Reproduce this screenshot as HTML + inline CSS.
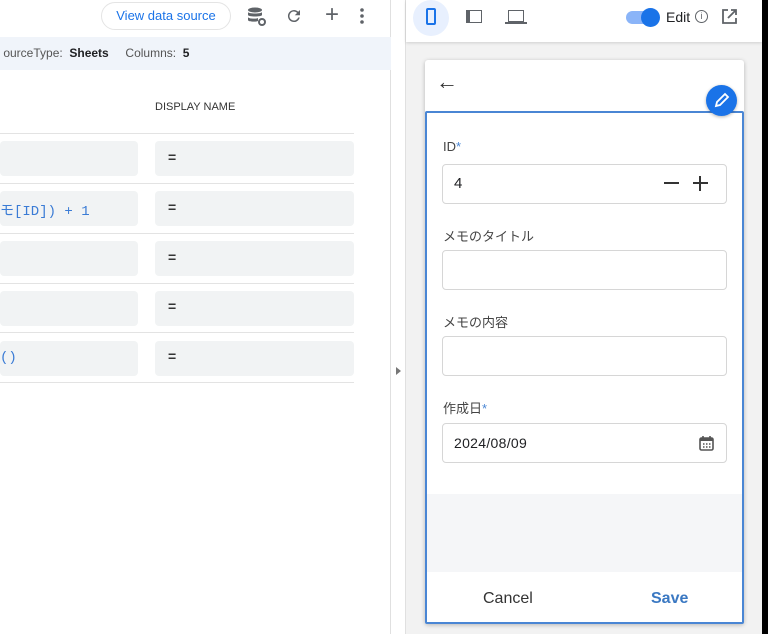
<!DOCTYPE html>
<html><head><meta charset="utf-8"><style>
*{box-sizing:border-box;margin:0;padding:0}
body{width:768px;height:634px;overflow:hidden;position:relative;background:#fff;font-family:"Liberation Sans","Noto Sans CJK JP",sans-serif;color:#202124}
.abs{position:absolute}
.mono{font-family:"Liberation Mono","Noto Sans CJK JP",monospace;color:#3a7bd5;font-size:14px}
.box{position:absolute;background:#f1f3f4;border-radius:4px;height:35px}
.line{position:absolute;left:0;width:354px;height:1px;background:#e3e3e3}
.eq{position:absolute;left:168px;font-size:14px;font-weight:bold;color:#333}
.inp{position:absolute;left:442px;width:285px;height:40px;border:1px solid #d6d6d6;border-radius:4px;background:#fff}
.lbl{position:absolute;left:443px;font-size:13px;color:#444}
</style></head><body>
<!-- left panel -->
<div class="abs" style="left:0;top:0;width:391px;height:634px;background:#fff;border-right:1px solid #e0e0e0"></div>
<div class="abs" style="left:101px;top:2px;width:130px;height:28px;border:1px solid #e4e4e4;border-radius:14px;color:#1a73e8;font-size:13px;line-height:26px;text-align:center">View data source</div>
<svg class="abs" style="left:246px;top:6px" width="22" height="22" viewBox="0 0 22 22"><ellipse cx="9" cy="4" rx="7" ry="2.5" fill="#5f6368"/><path d="M2 6c0 2 14 2 14 0v3c0 2-14 2-14 0zM2 11c0 2 9 2 10 1v3c-2 1-10 1-10-1z" fill="#5f6368"/><circle cx="16" cy="16" r="3" fill="none" stroke="#5f6368" stroke-width="2"/></svg>
<svg class="abs" style="left:285px;top:7px" width="18" height="18" viewBox="0 0 24 24"><path d="M17.6 6.4A8 8 0 1 0 19.7 14h-2.1a6 6 0 1 1-1.4-6.2L13 11h7V4z" fill="#5f6368"/></svg>
<div class="abs" style="left:325px;top:2px;font-size:24px;color:#5f6368;line-height:26px">+</div>
<svg class="abs" style="left:358px;top:7px" width="8" height="18"><circle cx="4" cy="3" r="1.8" fill="#5f6368"/><circle cx="4" cy="9" r="1.8" fill="#5f6368"/><circle cx="4" cy="15" r="1.8" fill="#5f6368"/></svg>
<div class="abs" style="left:0;top:37px;width:391px;height:33px;background:#f0f4fa;font-size:12px;line-height:33px;color:#555;white-space:nowrap">&nbsp;ourceType:&nbsp; <b style="color:#202124">Sheets</b> &nbsp; &nbsp; Columns:&nbsp; <b style="color:#202124">5</b></div>
<div class="abs" style="left:155px;top:101px;font-size:11px;color:#333">DISPLAY NAME</div>
<div class="line" style="top:133px"></div><div class="line" style="top:183px"></div><div class="line" style="top:233px"></div><div class="line" style="top:283px"></div><div class="line" style="top:332px"></div><div class="line" style="top:382px"></div>
<div class="box" style="left:0;top:141px;width:138px"></div><div class="box" style="left:155px;top:141px;width:199px"></div>
<div class="box" style="left:0;top:191px;width:138px"></div><div class="box" style="left:155px;top:191px;width:199px"></div>
<div class="box" style="left:0;top:241px;width:138px"></div><div class="box" style="left:155px;top:241px;width:199px"></div>
<div class="box" style="left:0;top:291px;width:138px"></div><div class="box" style="left:155px;top:291px;width:199px"></div>
<div class="box" style="left:0;top:341px;width:138px"></div><div class="box" style="left:155px;top:341px;width:199px"></div>
<div class="abs mono" style="left:0;top:200px">モ[ID]) + 1</div>
<div class="abs mono" style="left:0;top:350px">()</div>
<div class="eq" style="top:149px">=</div><div class="eq" style="top:199px">=</div><div class="eq" style="top:249px">=</div><div class="eq" style="top:298px">=</div><div class="eq" style="top:348px">=</div>
<div class="abs" style="left:396px;top:367px;width:0;height:0;border-left:5px solid #777;border-top:4px solid transparent;border-bottom:4px solid transparent"></div>
<!-- right panel -->
<div class="abs" style="left:405px;top:0;width:357px;height:634px;background:#f2f2f2;border-left:1px solid #e0e0e0"></div>
<div class="abs" style="left:406px;top:0;width:356px;height:42px;background:#fff;box-shadow:0 1px 3px rgba(0,0,0,.15)"></div>
<div class="abs" style="left:413px;top:0;width:36px;height:36px;border-radius:50%;background:#e8f0fe"></div>
<div class="abs" style="left:426px;top:8px;width:10px;height:17px;border:2px solid #1a73e8;border-radius:2px"></div>
<div class="abs" style="left:466px;top:10px;width:16px;height:13px;border:1.5px solid #5f6368;border-left-width:4px"></div>
<div class="abs" style="left:508px;top:10px;width:16px;height:12px;border:1.5px solid #5f6368"></div>
<div class="abs" style="left:505px;top:22px;width:22px;height:2px;background:#5f6368"></div>
<div class="abs" style="left:626px;top:11px;width:30px;height:13px;border-radius:7px;background:#8ab4f8"></div>
<div class="abs" style="left:641px;top:8px;width:19px;height:19px;border-radius:50%;background:#1a73e8"></div>
<div class="abs" style="left:666px;top:9px;font-size:14px;color:#202124">Edit</div>
<div class="abs" style="left:695px;top:10px;width:13px;height:13px;border:1.2px solid #5f6368;border-radius:50%;font-size:9px;text-align:center;line-height:11px;color:#5f6368">i</div>
<svg class="abs" style="left:722px;top:9px" width="15" height="15" viewBox="0 0 15 15"><path d="M6 1H1v13h13V9M9 1h5v5M14 1L6 9" fill="none" stroke="#5f6368" stroke-width="1.8"/></svg>
<!-- card -->
<div class="abs" style="left:425px;top:60px;width:319px;height:564px;background:#fff;border-radius:3px;box-shadow:0 1px 4px rgba(0,0,0,.25)"></div>
<div class="abs" style="left:436px;top:70px;font-size:22px;color:#333;line-height:24px">←</div>
<div class="abs" style="left:425px;top:111px;width:319px;height:513px;border:2px solid #4a86d4;border-radius:2px"></div>
<div class="abs" style="left:706px;top:85px;width:31px;height:31px;border-radius:50%;background:#1a73e8;box-shadow:0 1px 3px rgba(0,0,0,.3)"></div>
<svg class="abs" style="left:713px;top:92px" width="17" height="17" viewBox="0 0 17 17"><path d="M3 14l1-4 8-8 3 3-8 8z" fill="none" stroke="#fff" stroke-width="1.8"/></svg>
<div class="lbl" style="top:139px">ID<span style="color:#4a86d4">*</span></div>
<div class="inp" style="top:164px"></div>
<div class="abs" style="left:454px;top:175px;font-size:15px">4</div>
<div class="abs" style="left:664px;top:182px;width:15px;height:2px;background:#333"></div>
<div class="abs" style="left:693px;top:182px;width:15px;height:2px;background:#333"></div>
<div class="abs" style="left:699px;top:176px;width:2px;height:15px;background:#333"></div>
<div class="lbl" style="top:226px">メモのタイトル</div>
<div class="inp" style="top:250px"></div>
<div class="lbl" style="top:312px">メモの内容</div>
<div class="inp" style="top:336px"></div>
<div class="lbl" style="top:398px">作成日<span style="color:#4a86d4">*</span></div>
<div class="inp" style="top:423px"></div>
<div class="abs" style="left:454px;top:435px;font-size:14px;letter-spacing:.3px">2024/08/09</div>
<svg class="abs" style="left:699px;top:435px" width="15" height="16" viewBox="0 0 15 16"><rect x="1" y="3" width="13" height="12" rx="1.5" fill="none" stroke="#555" stroke-width="1.6"/><rect x="1" y="3" width="13" height="3" fill="#555"/><path d="M4 1v3M11 1v3" stroke="#555" stroke-width="1.6"/><path d="M4 9h1.5M7 9h1.5M10 9h1.5M4 12h1.5M7 12h1.5M10 12h1.5" stroke="#555" stroke-width="1.5"/></svg>
<div class="abs" style="left:427px;top:494px;width:315px;height:78px;background:#f5f6f8"></div>
<div class="abs" style="left:483px;top:590px;font-size:16px;color:#333">Cancel</div>
<div class="abs" style="left:651px;top:590px;font-size:16px;font-weight:bold;color:#3a78c2">Save</div>
<div class="abs" style="left:762px;top:0;width:6px;height:634px;background:#000"></div>
</body></html>
